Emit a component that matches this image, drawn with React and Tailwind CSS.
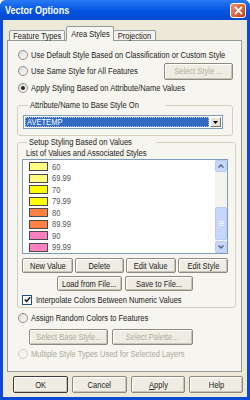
import React from 'react';

const items = [
  { v: '60', c: 'bg-[#ffff80]' },
  { v: '69.99', c: 'bg-[#ffff80]' },
  { v: '70', c: 'bg-[#ffff00]' },
  { v: '79.99', c: 'bg-[#ffff00]' },
  { v: '80', c: 'bg-[#ff8040]' },
  { v: '89.99', c: 'bg-[#ff8040]' },
  { v: '90', c: 'bg-[#ff80c0]' },
  { v: '99.99', c: 'bg-[#ff80c0]' },
];

// squeezed text, the screenshot is narrower than the real dialog
const T = ({ children, center }) => (
  <span className={`inline-block whitespace-nowrap scale-x-[0.82] ${center ? 'origin-center' : 'origin-left'}`}>{children}</span>
);

function Radio({ checked, disabled }) {
  return (
    <span className={`flex shrink-0 items-center justify-center w-[10px] h-[10px] rounded-full border ${disabled ? 'border-[#cfccbf] bg-[#f5f4ee]' : 'border-[#8b8d8f] bg-linear-to-br from-[#d9d8d0] to-white'}`}>
      {checked && <span className="w-[4px] h-[4px] rounded-full bg-[#2a2a2a]" />}
    </span>
  );
}

function Btn({ children, disabled, def, className = '' }) {
  return (
    <div className={`flex shrink-0 items-center justify-center bg-[#efede3] rounded-[2px] border ${def ? 'border-[#3a3a3a]' : 'border-[#8d8b80]'} shadow-[inset_1px_1px_0_#fff,inset_-1px_-1px_0_#c8c5b6] ${disabled ? 'text-[#b0ad9e]' : 'text-[#222]'} ${className}`}>
      <T center>{children}</T>
    </div>
  );
}

export default function App() {
  return (
    <div className="w-[250px] h-[400px] overflow-hidden flex flex-col bg-[#0a4ad6] rounded-t-[6px] text-[9.2px] leading-[10px] font-['Liberation_Sans',Arial,sans-serif]">
      {/* Title bar */}
      <div className="h-[20px] flex items-center justify-between pl-[5px] pr-[4px] rounded-t-[6px] bg-linear-to-b from-[#2a7bf6] via-[#0456e4] to-[#0348cf]">
        <span className="text-white font-bold text-[11px] leading-[12px]"><T>Vector Options</T></span>
        <div className="w-[16px] h-[15px] rounded-[3px] border border-white bg-linear-to-br from-[#ee8f6f] to-[#c8380f] flex items-center justify-center">
          <svg width="9" height="9" viewBox="0 0 9 9">
            <path d="M1.5 1.5 L7.5 7.5 M7.5 1.5 L1.5 7.5" stroke="#fff" strokeWidth="1.8" strokeLinecap="round" />
          </svg>
        </div>
      </div>

      {/* Body */}
      <div className="flex-1 mx-[3px] mb-[3px] bg-[#ece9d8] pt-[6px] text-[#222]">
        {/* Tabs */}
        <div className="flex items-end h-[14px] ml-[6px] relative z-10">
          <div className="w-[56px] h-[10px] border border-b-0 border-[#919b9c] rounded-t-[2px] bg-[#f4f3ee] flex items-center justify-center"><T center>Feature Types</T></div>
          <div className="w-[48px] h-[15px] -mb-[1px] ml-[1px] border border-b-0 border-[#919b9c] rounded-t-[2px] bg-[#f6f5ef] flex items-center justify-center"><T center>Area Styles</T></div>
          <div className="w-[42px] h-[10px] border border-b-0 border-l-0 border-[#919b9c] rounded-t-[2px] bg-[#f4f3ee] flex items-center justify-center"><T center>Projection</T></div>
        </div>

        {/* Tab panel */}
        <div className="ml-[4px] mr-[5px] h-[332px] border border-[#919b9c] bg-[#f6f5ef] pl-[9px] pr-[8px] pt-[6px]">
          <div className="flex items-center gap-[3px] h-[16px] ml-[1px]">
            <Radio />
            <T>Use Default Style Based on Classification or Custom Style</T>
          </div>
          <div className="flex items-center gap-[3px] h-[16px] ml-[1px]">
            <Radio />
            <T>Use Same Style for All Features</T>
            <Btn disabled className="ml-auto mr-[14px] w-[69px] h-[17px]">Select Style ...</Btn>
          </div>
          <div className="flex items-center gap-[3px] h-[16px] ml-[1px] mt-[1px]">
            <Radio checked />
            <T>Apply Styling Based on Attribute/Name Values</T>
          </div>

          <fieldset className="mt-[4px] border border-[#d0d0bf] rounded-[3px] pl-[5px] pr-[9px] pt-[5px] pb-[6px]">
            <legend className="ml-[5px] px-[2px] leading-[10px]"><T>Attribute/Name to Base Style On</T></legend>
            <div className="h-[14px] flex border border-[#7f9db9] bg-white p-[1px]">
              <div className="flex-1 bg-[#316ac5] text-white flex items-center pl-[2px] outline-1 outline-dotted outline-[#aac0e8] -outline-offset-1"><T>AVETEMP</T></div>
              <div className="w-[11px] ml-[1px] bg-[#e6e3d6] border border-t-white border-l-white border-r-[#7a786c] border-b-[#7a786c] flex items-center justify-center">
                <svg width="5" height="3" viewBox="0 0 5 3"><path d="M0 0 H5 L2.5 3 Z" fill="#000" /></svg>
              </div>
            </div>
          </fieldset>

          <fieldset className="mt-[1px] border border-[#d0d0bf] rounded-[3px] pl-[4px] pr-[7px] pt-[1px] pb-[2px]">
            <legend className="ml-[5px] px-[2px] leading-[10px]"><T>Setup Styling Based on Values</T></legend>
            <div className="h-[10px] pl-[4px]"><T>List of Values and Associated Styles</T></div>
            <div className="mt-[1px] h-[95px] flex border border-[#7f9db9] bg-white">
              <div className="flex-1 pt-[1px] pl-[6px]">
                {items.map(it => (
                  <div key={it.v} className="h-[11.5px] flex items-center gap-[4px]">
                    <span className={`w-[19px] h-[9px] border border-[#4a4a4a] ${it.c}`} />
                    <span className="text-[#555]"><T>{it.v}</T></span>
                  </div>
                ))}
              </div>
              <div className="w-[12px] flex flex-col bg-[#f4f3ee]">
                <div className="h-[12px] rounded-[2px] border border-[#b8cbf6] bg-[#c6d6fc] flex items-center justify-center">
                  <svg width="6" height="4" viewBox="0 0 6 4"><path d="M0.5 3.5 L3 1 L5.5 3.5" stroke="#4d6185" strokeWidth="1.3" fill="none" /></svg>
                </div>
                <div className="flex-1" />
                <div className="h-[33px] rounded-[2px] border border-[#b8cbf6] bg-[#c6d6fc] flex flex-col items-center justify-center gap-[1px]">
                  <span className="w-[5px] h-px bg-[#eef3ff]" />
                  <span className="w-[5px] h-px bg-[#eef3ff]" />
                  <span className="w-[5px] h-px bg-[#eef3ff]" />
                </div>
                <div className="h-[12px] mt-[1px] rounded-[2px] border border-[#b8cbf6] bg-[#c6d6fc] flex items-center justify-center">
                  <svg width="6" height="4" viewBox="0 0 6 4"><path d="M0.5 0.5 L3 3 L5.5 0.5" stroke="#4d6185" strokeWidth="1.3" fill="none" /></svg>
                </div>
              </div>
            </div>
            <div className="mt-[4px] flex gap-[2px] h-[15px]">
              <Btn className="w-[51px]">New Value</Btn>
              <Btn className="w-[49px]">Delete</Btn>
              <Btn className="w-[50px]">Edit Value</Btn>
              <Btn className="w-[50px]">Edit Style</Btn>
            </div>
            <div className="mt-[3px] flex gap-[3px] h-[15px] pl-[35px]">
              <Btn className="w-[65px]">Load from File...</Btn>
              <Btn className="w-[68px]">Save to File...</Btn>
            </div>
            <div className="mt-[3px] h-[11px] flex items-center gap-[4px]">
              <span className="w-[10px] h-[10px] shrink-0 border border-[#1c5180] bg-white flex items-center justify-center">
                <svg width="7" height="7" viewBox="0 0 7 7"><path d="M0.8 3.5 L2.6 5.4 L6.2 1.2" stroke="#111" strokeWidth="1.5" fill="none" /></svg>
              </span>
              <T>Interpolate Colors Between Numeric Values</T>
            </div>
          </fieldset>

          <div className="mt-[2px] flex items-center gap-[3px] h-[16px] ml-[1px]">
            <Radio />
            <T>Assign Random Colors to Features</T>
          </div>
          <div className="mt-[3px] flex gap-[4px] h-[16px] pl-[12px]">
            <Btn disabled className="w-[79px]">Select Base Style...</Btn>
            <Btn disabled className="w-[81px]">Select Palette...</Btn>
          </div>
          <div className="mt-[1px] flex items-center gap-[3px] h-[16px] ml-[1px] text-[#aca899]">
            <Radio disabled />
            <T>Multiple Style Types Used for Selected Layers</T>
          </div>
        </div>

        {/* Dialog buttons */}
        <div className="mt-[4px] ml-[10px] flex gap-[4px] h-[17px]">
          <Btn def className="w-[55px]">OK</Btn>
          <Btn className="w-[55px]">Cancel</Btn>
          <Btn className="w-[54px]"><u>A</u>pply</Btn>
          <Btn className="w-[54px]">Help</Btn>
        </div>
      </div>
    </div>
  );
}
